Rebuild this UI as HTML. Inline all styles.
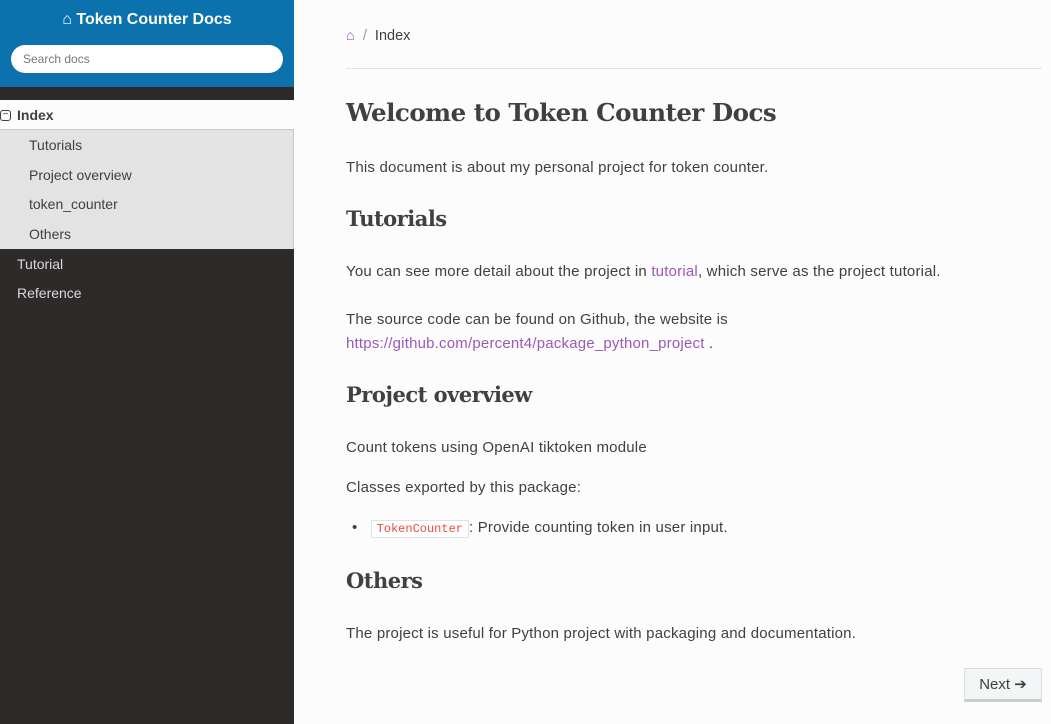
<!DOCTYPE html>
<html><head><meta charset="utf-8"><style>
*{box-sizing:border-box}
body{margin:0;width:1051px;height:724px;overflow:hidden;font-family:"Liberation Sans",sans-serif;background:#343131}
.side{position:absolute;left:0;top:0;width:294px;height:724px;background:#2d2a29}
.top{background:#0b72ad;height:87px;text-align:center;padding-top:11px}
.top .t{color:#fcfcfc;font-size:16px;font-weight:bold;height:20px}
.search{margin:14px auto 0;width:272px;height:28px;background:#fff;border-radius:14px;text-align:left;padding:7px 12px;font-size:12px;color:#777}
.gap{height:13px}
.idx{background:#fcfcfc;height:30px;line-height:30px;padding-left:17px;font-weight:bold;color:#404040;font-size:14px;position:relative;border-bottom:1px solid #c9c9c9}
.idx span{position:absolute;left:0;top:10px;width:11px;height:11px;border:1px solid #404040;border-radius:3px;font-size:10px;line-height:8px;text-align:center;font-weight:normal}
.sub{background:#e3e3e3;border-right:1px solid #c9c9c9}
.sub div{height:29.7px;line-height:31px;padding-left:29px;color:#404040;font-size:14px}
.nav div{height:29.7px;line-height:31px;padding-left:17px;color:#d9d9d9;font-size:14px}
.main{position:absolute;left:294px;top:0;width:757px;height:724px;background:#fcfcfc;padding-left:52px;color:#404040}
.bc{position:absolute;top:28px;left:52px;font-size:14.5px}
.hr{position:absolute;top:68px;left:52px;width:696px;border-top:1px solid #e1e4e5}
h1,h2{font-family:"DejaVu Serif",serif;font-weight:bold;margin:0;position:absolute;left:52px;color:#404040}
h1{font-size:24.5px;top:98px;letter-spacing:-0.5px}
h2{font-size:21px;letter-spacing:-0.5px}
p{position:absolute;left:52px;margin:0;font-size:15px;line-height:24px;letter-spacing:0.2px}
a{color:#9b59b6;text-decoration:none}
code{font-family:"Liberation Mono",monospace;color:#e74c3c;font-size:12px;border:1px solid #e1e4e5;background:#fff;padding:1px 5px;letter-spacing:0}
.next{position:absolute;left:670px;top:668px;width:78px;height:34px;background:#f3f6f6;border:1px solid #ddd;border-bottom:3px solid #ccc;font-size:15px;line-height:32px;text-align:center;color:#404040}
</style></head><body>
<div class="side">
<div class="top"><div class="t">⌂ Token Counter Docs</div><div class="search">Search docs</div></div>
<div class="gap"></div>
<div class="idx"><span>−</span>Index</div>
<div class="sub"><div>Tutorials</div><div>Project overview</div><div>token_counter</div><div>Others</div></div>
<div class="nav"><div>Tutorial</div><div>Reference</div></div>
</div>
<div class="main">
<div class="bc"><span style="color:#9b59b6">⌂</span> &nbsp;<span style="color:#999">/</span>&nbsp; Index</div>
<div class="hr"></div>
<h1>Welcome to Token Counter Docs</h1>
<p style="top:156px">This document is about my personal project for token counter.</p>
<h2 style="top:206px">Tutorials</h2>
<p style="top:260px">You can see more detail about the project in <a>tutorial</a>, which serve as the project tutorial.</p>
<p style="top:308px">The source code can be found on Github, the website is<br><a>https://github.com/percent4/package_python_project</a> .</p>
<h2 style="top:382px">Project overview</h2>
<p style="top:436px">Count tokens using OpenAI tiktoken module</p>
<p style="top:476px">Classes exported by this package:</p>
<p style="top:516px;left:58px">•&nbsp;&nbsp; <code>TokenCounter</code>: Provide counting token in user input.</p>
<h2 style="top:568px">Others</h2>
<p style="top:622px">The project is useful for Python project with packaging and documentation.</p>
<div class="next">Next ➔</div>
</div>
</body></html>
